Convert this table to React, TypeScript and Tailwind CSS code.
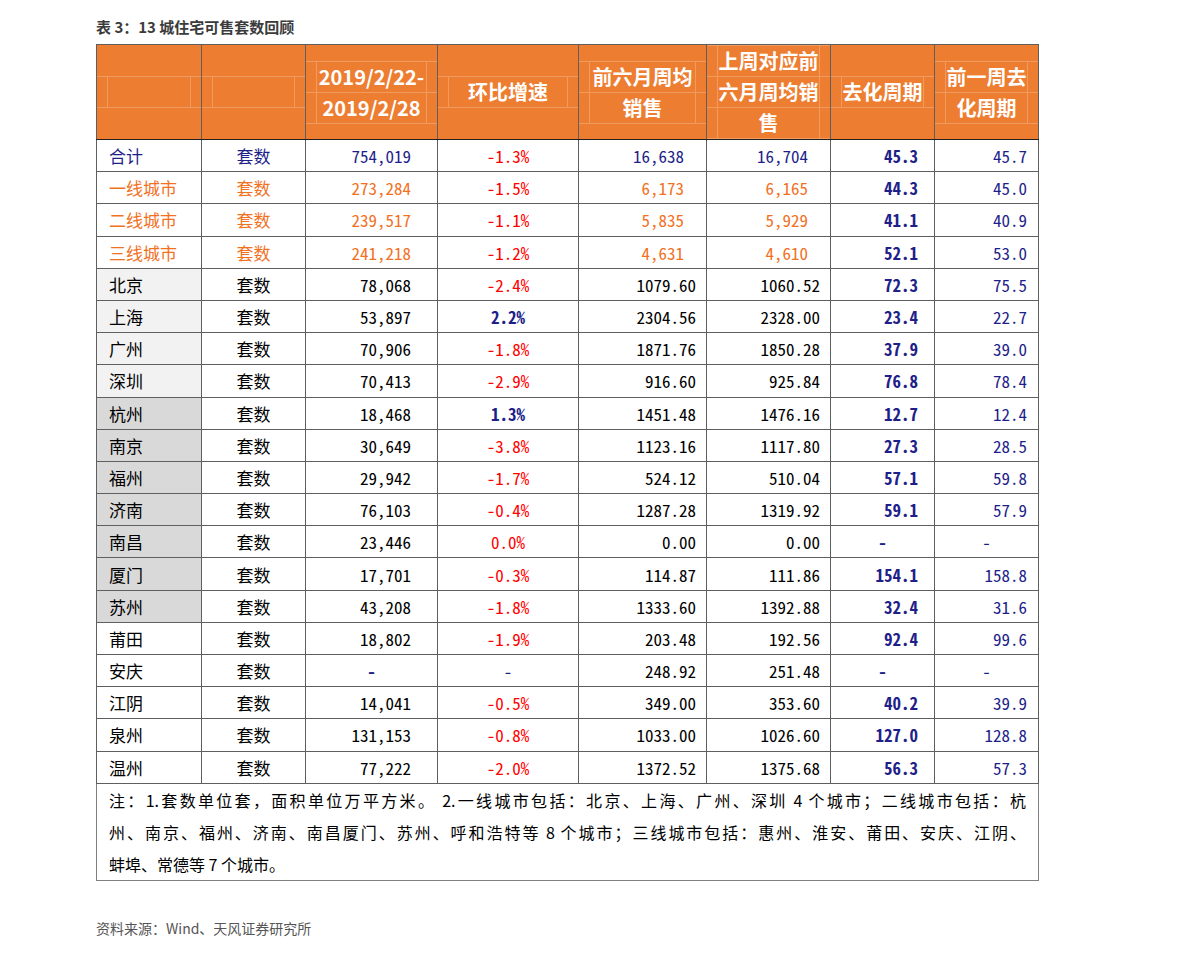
import React from 'react';

type Kind = 'total' | 'tier' | 'city';
type Row = {
  name: string;
  units: string;
  supply: string;
  change: string;
  prevAvg: string;
  lastAvg: string;
  cycle: string;
  prevCycle: string;
  kind: Kind;
  shade?: 'light' | 'dark';
};

const ROWS: Row[] = [
  { name: '合计', units: '套数', supply: '754,019', change: '-1.3%', prevAvg: '16,638', lastAvg: '16,704', cycle: '45.3', prevCycle: '45.7', kind: 'total' },
  { name: '一线城市', units: '套数', supply: '273,284', change: '-1.5%', prevAvg: '6,173', lastAvg: '6,165', cycle: '44.3', prevCycle: '45.0', kind: 'tier' },
  { name: '二线城市', units: '套数', supply: '239,517', change: '-1.1%', prevAvg: '5,835', lastAvg: '5,929', cycle: '41.1', prevCycle: '40.9', kind: 'tier' },
  { name: '三线城市', units: '套数', supply: '241,218', change: '-1.2%', prevAvg: '4,631', lastAvg: '4,610', cycle: '52.1', prevCycle: '53.0', kind: 'tier' },
  { name: '北京', units: '套数', supply: '78,068', change: '-2.4%', prevAvg: '1079.60', lastAvg: '1060.52', cycle: '72.3', prevCycle: '75.5', kind: 'city', shade: 'light' },
  { name: '上海', units: '套数', supply: '53,897', change: '2.2%', prevAvg: '2304.56', lastAvg: '2328.00', cycle: '23.4', prevCycle: '22.7', kind: 'city', shade: 'light' },
  { name: '广州', units: '套数', supply: '70,906', change: '-1.8%', prevAvg: '1871.76', lastAvg: '1850.28', cycle: '37.9', prevCycle: '39.0', kind: 'city', shade: 'light' },
  { name: '深圳', units: '套数', supply: '70,413', change: '-2.9%', prevAvg: '916.60', lastAvg: '925.84', cycle: '76.8', prevCycle: '78.4', kind: 'city', shade: 'light' },
  { name: '杭州', units: '套数', supply: '18,468', change: '1.3%', prevAvg: '1451.48', lastAvg: '1476.16', cycle: '12.7', prevCycle: '12.4', kind: 'city', shade: 'dark' },
  { name: '南京', units: '套数', supply: '30,649', change: '-3.8%', prevAvg: '1123.16', lastAvg: '1117.80', cycle: '27.3', prevCycle: '28.5', kind: 'city', shade: 'dark' },
  { name: '福州', units: '套数', supply: '29,942', change: '-1.7%', prevAvg: '524.12', lastAvg: '510.04', cycle: '57.1', prevCycle: '59.8', kind: 'city', shade: 'dark' },
  { name: '济南', units: '套数', supply: '76,103', change: '-0.4%', prevAvg: '1287.28', lastAvg: '1319.92', cycle: '59.1', prevCycle: '57.9', kind: 'city', shade: 'dark' },
  { name: '南昌', units: '套数', supply: '23,446', change: '0.0%', prevAvg: '0.00', lastAvg: '0.00', cycle: '-', prevCycle: '-', kind: 'city', shade: 'dark' },
  { name: '厦门', units: '套数', supply: '17,701', change: '-0.3%', prevAvg: '114.87', lastAvg: '111.86', cycle: '154.1', prevCycle: '158.8', kind: 'city', shade: 'dark' },
  { name: '苏州', units: '套数', supply: '43,208', change: '-1.8%', prevAvg: '1333.60', lastAvg: '1392.88', cycle: '32.4', prevCycle: '31.6', kind: 'city', shade: 'dark' },
  { name: '莆田', units: '套数', supply: '18,802', change: '-1.9%', prevAvg: '203.48', lastAvg: '192.56', cycle: '92.4', prevCycle: '99.6', kind: 'city' },
  { name: '安庆', units: '套数', supply: '-', change: '-', prevAvg: '248.92', lastAvg: '251.48', cycle: '-', prevCycle: '-', kind: 'city' },
  { name: '江阴', units: '套数', supply: '14,041', change: '-0.5%', prevAvg: '349.00', lastAvg: '353.60', cycle: '40.2', prevCycle: '39.9', kind: 'city' },
  { name: '泉州', units: '套数', supply: '131,153', change: '-0.8%', prevAvg: '1033.00', lastAvg: '1026.60', cycle: '127.0', prevCycle: '128.8', kind: 'city' },
  { name: '温州', units: '套数', supply: '77,222', change: '-2.0%', prevAvg: '1372.52', lastAvg: '1375.68', cycle: '56.3', prevCycle: '57.3', kind: 'city' },
];

const HEADERS: string[][] = [
  [''],
  [''],
  ['2019/2/22-', '2019/2/28'],
  ['环比增速'],
  ['前六月周均', '销售'],
  ['上周对应前', '六月周均销', '售'],
  ['去化周期'],
  ['前一周去', '化周期'],
];

const COL_WIDTHS = ['w-[105px]', 'w-[104px]', 'w-[132px]', 'w-[141px]', 'w-[128px]', 'w-[124px]', 'w-[104px]', 'w-[104px]'];

const NAVY = 'text-[#1f1f8a]';
const ORANGE = 'text-[#f2711f]';
const RED = 'text-[#ff0000]';

const cellBase = 'h-[32.2px] p-0 border border-[#5f5f5f] align-middle whitespace-nowrap leading-none';
const mono = "font-['Noto_Sans_Mono_CJK_SC','DejaVu_Sans_Mono',monospace]";

function HeaderCell({ lines, width }: { lines: string[]; width: string }) {
  return (
    <th className={`${width} h-[94px] p-0 border border-[#5f5f5f] border-b-[#222] bg-[#ed7d31] align-middle`}>
      <div className="flex flex-col">
        {lines.map((line, i) => (
          <div key={i} className={`border-b border-[#f29b61] ${i === 0 ? 'border-t' : ''}`}>
            <div className="mx-[10px] h-[30px] border-x border-[#f29b61] text-[20px] leading-[30px] font-bold text-white">
              {line}
            </div>
          </div>
        ))}
      </div>
    </th>
  );
}

function DataRow({ row, index }: { row: Row; index: number }) {
  const main = row.kind === 'total' ? NAVY : row.kind === 'tier' ? ORANGE : 'text-black';
  const shade = row.shade === 'light' ? 'bg-[#f2f2f2]' : row.shade === 'dark' ? 'bg-[#d9d9d9]' : 'bg-white';
  const positive = !row.change.startsWith('-') && row.change !== '0.0%';
  const changeClass = row.change === '-' ? NAVY : positive ? `${NAVY} font-bold` : RED;
  const avgPad = index < 4 ? 'pr-[22px]' : 'pr-[10px]';
  const supplyClass = row.supply === '-' ? `${NAVY} font-bold text-center` : `${main} text-right pr-[26px]`;
  const dash = row.cycle === '-';

  return (
    <tr className="text-[17px]">
      <td className={`${cellBase} ${shade} ${main} pl-[12px] text-left`}>{row.name}</td>
      <td className={`${cellBase} ${main} text-center`}>{row.units}</td>
      <td className={`${cellBase} ${mono} ${supplyClass}`}>{row.supply}</td>
      <td className={`${cellBase} ${mono} ${changeClass} text-center`}>{row.change}</td>
      <td className={`${cellBase} ${mono} ${main} text-right ${avgPad}`}>{row.prevAvg}</td>
      <td className={`${cellBase} ${mono} ${main} text-right ${avgPad}`}>{row.lastAvg}</td>
      <td className={`${cellBase} ${mono} ${NAVY} font-bold ${dash ? 'text-center' : 'text-right pr-[16px]'}`}>{row.cycle}</td>
      <td className={`${cellBase} ${mono} ${NAVY} ${dash ? 'text-center' : 'text-right pr-[11px]'}`}>{row.prevCycle}</td>
    </tr>
  );
}

export default function App() {
  return (
    <div className="w-[1191px] h-[957px] bg-white pl-[96px] font-['Noto_Sans_CJK_SC',sans-serif]">
      <div className="pt-[18px] h-[44px] text-[15px] leading-[18px] font-semibold text-[#3b3b3b]">
        表 3：13 城住宅可售套数回顾
      </div>

      <table className="w-[942px] table-fixed border-collapse border border-[#808080]">
        <thead>
          <tr>
            {HEADERS.map((lines, i) => (
              <HeaderCell key={i} lines={lines} width={COL_WIDTHS[i]} />
            ))}
          </tr>
        </thead>
        <tbody>
          {ROWS.map((row, i) => (
            <DataRow key={row.name} row={row} index={i} />
          ))}
          <tr>
            <td colSpan={8} className="h-[96px] p-0 border border-[#808080] border-t-[#333] align-middle">
              <div className="px-[12px] text-[16px] leading-[32px] text-black">
                <div className="text-justify [text-align-last:justify]">
                  注：1.套数单位套，面积单位万平方米。 2.一线城市包括：北京、上海、广州、深圳 4 个城市；二线城市包括：杭
                </div>
                <div className="text-justify [text-align-last:justify]">
                  州、南京、福州、济南、南昌厦门、苏州、呼和浩特等 8 个城市；三线城市包括：惠州、淮安、莆田、安庆、江阴、
                </div>
                <div>蚌埠、常德等 7 个城市。</div>
              </div>
            </td>
          </tr>
        </tbody>
      </table>

      <div className="mt-[38px] text-[14px] leading-[18px] text-[#555]">资料来源：Wind、天风证券研究所</div>
    </div>
  );
}
